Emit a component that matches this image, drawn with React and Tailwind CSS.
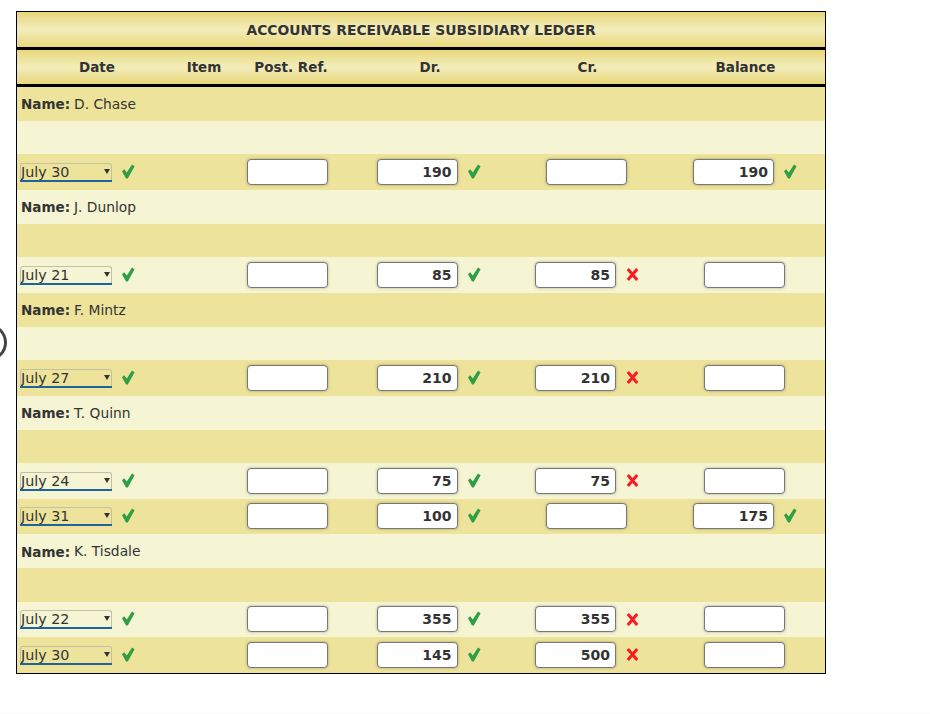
const ledger = [
  { name: "D. Chase", rows: [{ date: "July 30", dr: "190", drOk: true, bal: "190", balOk: true }] },
  { name: "J. Dunlop", rows: [{ date: "July 21", dr: "85", drOk: true, cr: "85", crOk: false }] },
  { name: "F. Mintz", rows: [{ date: "July 27", dr: "210", drOk: true, cr: "210", crOk: false }] },
  {
    name: "T. Quinn",
    rows: [
      { date: "July 24", dr: "75", drOk: true, cr: "75", crOk: false },
      { date: "July 31", dr: "100", drOk: true, bal: "175", balOk: true },
    ],
  },
  {
    name: "K. Tisdale",
    rows: [
      { date: "July 22", dr: "355", drOk: true, cr: "355", crOk: false },
      { date: "July 30", dr: "145", drOk: true, cr: "500", crOk: false },
    ],
  },
];

const dark = "bg-[#eee39b]";
const light = "bg-[#f5f4d3]";
const cols = "grid grid-cols-[160px_54px_120px_158px_157px_159px] items-center";
const headBar = "bg-gradient-to-b from-[#e8d779] via-[#f3edbb] to-[#e8d779]";

function Mark({ ok }) {
  if (ok) {
    return (
      <svg width="15" height="15" viewBox="0 0 15 15" className="shrink-0 mb-[2px]">
        <path d="M1 7.2 L3.2 5.2 L5.8 8.4 L11 0.6 L13.6 2.2 L6.8 14.6 L5 14.6 Z" fill="#2f9e44" />
      </svg>
    );
  }
  return (
    <svg width="15" height="15" viewBox="0 0 15 15" className="shrink-0 mb-[1px]">
      <path d="M2.8 2 L12.2 13 M12.2 2 L2.8 13" stroke="#fb1a22" strokeWidth="3" fill="none" />
    </svg>
  );
}

function Field({ value, ok }) {
  return (
    <div className={`flex items-center justify-center gap-[9px] ${ok === undefined ? "pr-[2px]" : ""}`}>
      <input
        readOnly
        value={value || ""}
        className="w-[81px] h-[26px] mb-[0.8px] bg-white border-[1.5px] border-[#777] rounded-[4px] shadow-[0_0_3px_rgba(0,0,0,0.3)] text-right pr-[5px] font-bold text-[14px] text-[#333] outline-none"
      />
      {ok !== undefined && <Mark ok={ok} />}
    </div>
  );
}

function DateSelect({ date }) {
  return (
    <div className="flex items-center gap-[9px] pl-[3px]">
      <div className="relative w-[92px] border-b-2 border-[#20639b]">
        <select
          value={date}
          onChange={() => {}}
          className="block w-full h-[17px] pt-[1px] appearance-none bg-transparent border-[1.5px] border-b-0 border-[#c4c0a6] rounded-t-[3px] text-[14.3px] leading-[15px] text-[#333] outline-none"
        >
          <option>{date}</option>
        </select>
        <span className="absolute right-[2px] top-[6px] w-0 h-0 border-x-[3.5px] border-x-transparent border-t-[5px] border-t-[#333]" />
      </div>
      <Mark ok />
    </div>
  );
}

function Row({ row, shade }) {
  return (
    <div className={`${cols} h-[35.6px] ${shade}`}>
      <DateSelect date={row.date} />
      <div />
      <div className="pr-[5px]">
        <Field />
      </div>
      <div className="pr-[2px]">
        <Field value={row.dr} ok={row.drOk} />
      </div>
      <Field value={row.cr} ok={row.crOk} />
      <Field value={row.bal} ok={row.balOk} />
    </div>
  );
}

export default function App() {
  // stripes alternate across the whole table, so count them as we go
  let stripe = 0;
  const next = () => (stripe++ % 2 === 0 ? dark : light);

  return (
    <div className="relative h-[714px] bg-white border-b border-[#fafafa] pt-[11px] pl-[16px] font-['DejaVu_Sans',sans-serif] text-[#333] overflow-hidden">
      <div className="absolute left-[-30px] top-[324px] w-[37px] h-[37px] rounded-full border-[3px] border-[#444]" />
      <div className="w-[810px] border border-black">
        <div className={`h-[35px] pt-[2px] flex items-center justify-center font-bold text-[13.85px] ${headBar}`}>
          ACCOUNTS RECEIVABLE SUBSIDIARY LEDGER
        </div>
        <div className={`${cols} h-[40px] border-y-[3px] border-black font-bold text-[13.5px] text-center ${headBar}`}>
          <div>Date</div>
          <div>Item</div>
          <div>Post. Ref.</div>
          <div>Dr.</div>
          <div>Cr.</div>
          <div>Balance</div>
        </div>
        {ledger.map((account) => (
          <div key={account.name}>
            <div className={`h-[33.7px] pt-[1px] flex items-center pl-[4px] text-[13.5px] ${next()}`}>
              <span className="font-bold mr-[4px]">Name:</span>
              <span className="text-[13.8px]">{account.name}</span>
            </div>
            <div className={`h-[33.7px] ${next()}`} />
            {account.rows.map((row) => (
              <Row key={row.date} row={row} shade={next()} />
            ))}
          </div>
        ))}
      </div>
    </div>
  );
}
